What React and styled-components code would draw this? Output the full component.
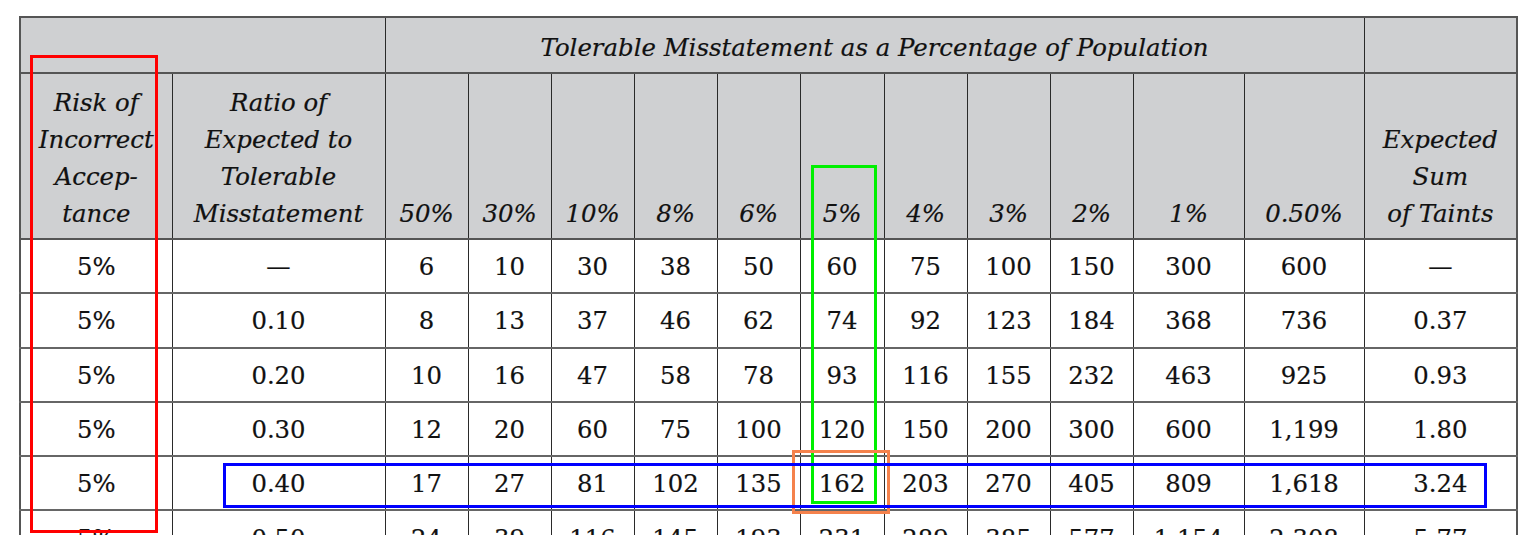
import React from 'react';
import styled, { createGlobalStyle } from 'styled-components';

const GlobalStyle = createGlobalStyle`
  html, body {
    margin: 0;
    padding: 0;
    background: #fff;
  }
`;

const cols = [152, 213, 83, 83, 83, 83, 83, 84, 83, 83, 83, 111, 120, 153];
const percents = ['50%', '30%', '10%', '8%', '6%', '5%', '4%', '3%', '2%', '1%', '0.50%'];

const rows = [
  ['5%', '\u2014', '6', '10', '30', '38', '50', '60', '75', '100', '150', '300', '600', '\u2014'],
  ['5%', '0.10', '8', '13', '37', '46', '62', '74', '92', '123', '184', '368', '736', '0.37'],
  ['5%', '0.20', '10', '16', '47', '58', '78', '93', '116', '155', '232', '463', '925', '0.93'],
  ['5%', '0.30', '12', '20', '60', '75', '100', '120', '150', '200', '300', '600', '1,199', '1.80'],
  ['5%', '0.40', '17', '27', '81', '102', '135', '162', '203', '270', '405', '809', '1,618', '3.24'],
  ['5%', '0.50', '24', '39', '116', '145', '193', '231', '289', '385', '577', '1,154', '2,308', '5.77'],
];

const Page = styled.div`
  position: relative;
  height: 535px;
  overflow: hidden;
  padding: 16px 0 0 19px;
  box-sizing: border-box;
`;

const Table = styled.table`
  width: 1497px;
  table-layout: fixed;
  border-collapse: collapse;
  font-family: "DejaVu Serif", serif;
  color: #111;
  border: 2px solid #555;
  -webkit-text-stroke: 0.2px #111;
`;

const TitleRow = styled.tr`
  height: 56px;
`;

const LabelRow = styled.tr`
  height: 166px;
`;

const BodyRow = styled.tr`
  height: 54.3px;
`;

const Th = styled.th`
  background: #cfd0d2;
  font-weight: normal;
  font-style: italic;
  font-size: 24.4px;
  line-height: 37px;
  text-align: center;
  white-space: nowrap;
  padding: ${p => (p.$title ? '5px 0 0' : '0 0 6px')};
  vertical-align: ${p => (p.$title ? 'middle' : 'bottom')};
  border-left: 1px solid #2a2a2a;
  border-right: 1px solid #2a2a2a;
  border-top: 2px solid #555;
  border-bottom: 2px solid #555;
`;

const Td = styled.td`
  font-size: 24.3px;
  text-align: center;
  vertical-align: middle;
  padding: 1px 0 0;
  white-space: nowrap;
  border-left: 1px solid #2a2a2a;
  border-right: 1px solid #2a2a2a;
  border-top: 2px solid #666;
  border-bottom: 2px solid #666;
`;

const Mark = styled.div`
  position: absolute;
  box-sizing: border-box;
  border: 3px solid ${p => p.$color};
  pointer-events: none;
`;

const marks = [
  { color: '#ff0000', left: 30, top: 55, width: 128, height: 478 },
  { color: '#00f000', left: 811, top: 165, width: 66, height: 339 },
  { color: '#f5824c', left: 792, top: 450, width: 98, height: 64 },
  { color: '#0000ff', left: 223, top: 463, width: 1264, height: 45 },
];

const App = () => {
  return (
    <Page>
      <GlobalStyle />
      <Table>
        <colgroup>
          {cols.map((w, i) => (
            <col key={i} style={{ width: w }} />
          ))}
        </colgroup>
        <thead>
          <TitleRow>
            <Th colSpan={2} $title />
            <Th colSpan={11} $title>Tolerable Misstatement as a Percentage of Population</Th>
            <Th $title />
          </TitleRow>
          <LabelRow>
            <Th>Risk of<br />Incorrect<br />Accep-<br />tance</Th>
            <Th>Ratio of<br />Expected to<br />Tolerable<br />Misstatement</Th>
            {percents.map(p => (
              <Th key={p}>{p}</Th>
            ))}
            <Th>Expected<br />Sum<br />of Taints</Th>
          </LabelRow>
        </thead>
        <tbody>
          {rows.map((r, i) => (
            <BodyRow key={i}>
              {r.map((c, j) => (
                <Td key={j}>{c}</Td>
              ))}
            </BodyRow>
          ))}
        </tbody>
      </Table>
      {marks.map((m, i) => (
        <Mark
          key={i}
          $color={m.color}
          style={{ left: m.left, top: m.top, width: m.width, height: m.height }}
        />
      ))}
    </Page>
  );
};

export default App;
